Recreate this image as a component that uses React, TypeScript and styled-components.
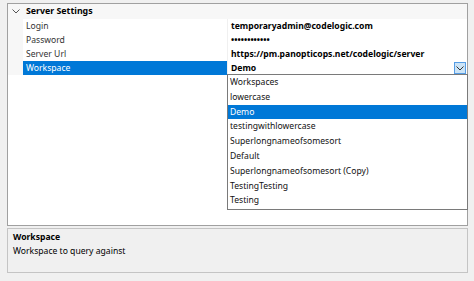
import * as React from 'react'
import styled, { createGlobalStyle } from 'styled-components'

const GlobalStyle = createGlobalStyle`
  html, body {
    margin: 0;
    padding: 0;
    background: #f0f0f0;
  }
  body {
    font-family: 'Noto Sans', 'Open Sans', sans-serif;
    font-size: 8.6px;
    color: #000;
  }
`

const Page = styled.div`
  width: 474px;
  height: 281px;
  box-sizing: border-box;
  padding: 3px 6px 0 7px;
  display: flex;
  flex-direction: column;
  gap: 2px;
`

const Grid = styled.div`
  position: relative;
  height: 223px;
  box-sizing: border-box;
  border: 1px solid #a0a0a0;
  background: #fff;
`

const Row = styled.div`
  display: flex;
  height: 14px;
  line-height: 14px;
  white-space: nowrap;
`

const Margin = styled.div`
  width: 15px;
  flex: 0 0 15px;
  background: #f7f7f7;
  display: flex;
  align-items: center;
  justify-content: center;
`

const CategoryRow = styled(Row)`
  height: 15px;
  line-height: 15px;
  background: #f7f7f7;
`

const CategoryTitle = styled.div`
  font-weight: bold;
  font-size: 8.8px;
  padding-left: 3px;
`

const Label = styled.div<{ $selected?: boolean }>`
  width: 204px;
  flex: 0 0 204px;
  padding-left: 3px;
  box-sizing: border-box;
  color: ${p => (p.$selected ? '#fff' : '#333')};
  background: ${p => (p.$selected ? '#0078d7' : '#fff')};
`

const Value = styled.div`
  flex: 1;
  padding-left: 3px;
  font-weight: bold;
  display: flex;
  align-items: center;
  justify-content: space-between;
  border-left: 1px solid #f0f0f0;
`

const DropButton = styled.div`
  width: 12px;
  height: 12px;
  margin-right: 1px;
  box-sizing: border-box;
  border: 1px solid #569de5;
  background: #cce4f7;
  display: flex;
  align-items: center;
  justify-content: center;
`

const DropList = styled.div`
  position: absolute;
  left: 219px;
  top: 70px;
  width: 241px;
  box-sizing: border-box;
  border: 1px solid #7a7a7a;
  background: #fff;
  padding-bottom: 1px;
`

const Item = styled.div<{ $selected?: boolean }>`
  height: 14.8px;
  line-height: 14.8px;
  padding-left: 2px;
  color: ${p => (p.$selected ? '#fff' : '#111')};
  background: ${p => (p.$selected ? '#0078d7' : 'transparent')};
`

const Description = styled.div`
  height: 45px;
  box-sizing: border-box;
  border: 1px solid #c4c4c4;
  background: #f0f0f0;
  padding: 1px 0 0 5px;
  line-height: 14px;
`

const DescTitle = styled.div`
  font-weight: bold;
`

const Chevron = ({ color = '#555' }: { color?: string }) => (
  <svg width="8" height="5" viewBox="0 0 8 5">
    <path d="M0.5 0.5 L4 4 L7.5 0.5" fill="none" stroke={color} strokeWidth="1" />
  </svg>
)

const properties = [
  { label: 'Login', value: 'temporaryadmin@codelogic.com' },
  { label: 'Password', value: '••••••••••••' },
  { label: 'Server Url', value: 'https://pm.panopticops.net/codelogic/server' },
]

const workspaces = [
  'Workspaces',
  'lowercase',
  'Demo',
  'testingwithlowercase',
  'Superlongnameofsomesort',
  'Default',
  'Superlongnameofsomesort (Copy)',
  'TestingTesting',
  'Testing',
]

export default function App() {
  return (
    <Page>
      <GlobalStyle />
      <Grid>
        <CategoryRow>
          <Margin>
            <Chevron />
          </Margin>
          <CategoryTitle>Server Settings</CategoryTitle>
        </CategoryRow>
        {properties.map(p => (
          <Row key={p.label}>
            <Margin />
            <Label>{p.label}</Label>
            <Value>{p.value}</Value>
          </Row>
        ))}
        <Row>
          <Margin />
          <Label $selected>Workspace</Label>
          <Value>
            Demo
            <DropButton>
              <Chevron color="#333" />
            </DropButton>
          </Value>
        </Row>
        <DropList>
          {workspaces.map(w => (
            <Item key={w} $selected={w === 'Demo'}>
              {w}
            </Item>
          ))}
        </DropList>
      </Grid>
      <Description>
        <DescTitle>Workspace</DescTitle>
        <div>Workspace to query against</div>
      </Description>
    </Page>
  )
}
